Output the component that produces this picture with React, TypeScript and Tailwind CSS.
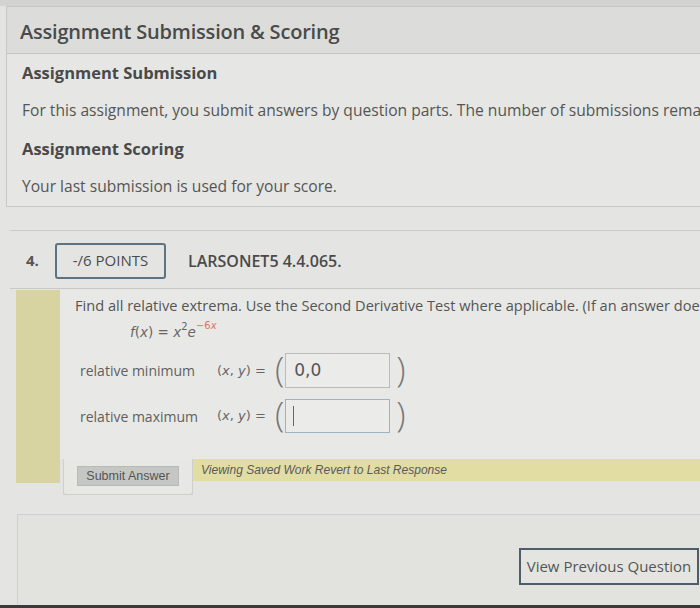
import React from 'react';

export default function App() {
  return (
    <div className="w-[700px] h-[608px] overflow-hidden flex flex-col bg-[#e4e5e2] font-['Open_Sans',sans-serif] text-[#4b4b4b]">
      <div className="h-[6px] shrink-0 bg-[#d3d4d1]" />

      {/* Assignment Submission & Scoring panel */}
      <div className="ml-[6px] shrink-0 border-t border-l border-b border-[#c7c8c5]">
        <div className="h-[47px] flex items-center pl-[13px] pt-[3px] bg-[#dcddda] border-b border-[#c4c5c2]">
          <h1 className="text-[20px] font-semibold text-[#4a4a4a] tracking-[-0.2px]">Assignment Submission &amp; Scoring</h1>
        </div>
        <div className="px-[15px] bg-[#e6e7e4] overflow-hidden">
          <div className="h-[38px] flex items-center text-[16.5px] font-bold text-[#4a4a4a]">Assignment Submission</div>
          <div className="h-[38px] flex items-center text-[15.6px] whitespace-nowrap text-[#555]">
            For this assignment, you submit answers by question parts. The number of submissions remaining for each question part only changes if you submit or change the answer.
          </div>
          <div className="h-[38px] flex items-center text-[16.5px] font-bold text-[#4a4a4a]">Assignment Scoring</div>
          <div className="h-[38px] flex items-center text-[15.6px] text-[#555]">Your last submission is used for your score.</div>
        </div>
      </div>

      {/* Question 4 */}
      <div className="ml-[10px] mt-[23px] shrink-0 border-t border-[#cbccc9]">
        <div className="h-[58px] flex items-center pl-[16px] pt-[2px] border-b border-[#c9cac7]">
          <span className="w-[29px] shrink-0 text-[15px] font-bold text-[#555]">4.</span>
          <div className="w-[111px] h-[36px] shrink-0 flex items-center justify-center border-2 border-[#5d7382] rounded-[3px] text-[15px] text-[#4a4a4a]">
            -/6 POINTS
          </div>
          <span className="ml-[22px] text-[16px] font-semibold text-[#4a4a4a]">LARSONET5 4.4.065.</span>
        </div>

        <div className="flex items-start">
          <div className="ml-[6px] mt-[1px] w-[44px] h-[193px] shrink-0 bg-[#d8d4a2]" />
          <div className="flex-1 min-w-0 mt-[1px] flex flex-col overflow-hidden">
            <div className="bg-[#e8e9e6]">
              <p className="pl-[15px] pt-[5px] text-[14.6px] leading-[20px] whitespace-nowrap text-[#555]">
                Find all relative extrema. Use the Second Derivative Test where applicable. (If an answer does not exist, enter DNE.)
              </p>
              <div className="pl-[70px] mt-[7px] h-[20px] flex items-center font-['DejaVu_Sans',sans-serif] text-[13.5px] text-[#666]">
                <span className="italic">f</span>(<span className="italic">x</span>)&nbsp;=&nbsp;<span className="italic">x</span>
                <sup className="text-[10px]">2</sup>
                <span className="italic">e</span>
                <sup className="text-[10px] text-[#e0706a] -translate-y-[1px]">−6<span className="italic">x</span></sup>
              </div>

              <div className="mt-[11px] flex items-center h-[35px]">
                <span className="pl-[20px] w-[157px] shrink-0 text-[14px] text-[#606060]">relative minimum</span>
                <span className="w-[58px] shrink-0 font-['DejaVu_Sans',sans-serif] text-[13px] text-[#666] whitespace-nowrap">
                  (<span className="italic">x</span>, <span className="italic">y</span>) =
                </span>
                <span className="text-[34px] font-light leading-none text-[#777] -mt-[4px]">(</span>
                <div className="ml-[1px] w-[105px] h-[35px] shrink-0 flex items-center pl-[8px] border border-[#b9bcbb] bg-[#ebecea] font-['DejaVu_Sans',sans-serif] text-[17px] text-[#555]">
                  0,0
                </div>
                <span className="ml-[6px] text-[34px] font-light leading-none text-[#777] -mt-[4px]">)</span>
              </div>

              <div className="mt-[11px] flex items-center h-[34px]">
                <span className="pl-[20px] w-[157px] shrink-0 text-[14px] text-[#606060]">relative maximum</span>
                <span className="w-[58px] shrink-0 font-['DejaVu_Sans',sans-serif] text-[13px] text-[#666] whitespace-nowrap">
                  (<span className="italic">x</span>, <span className="italic">y</span>) =
                </span>
                <span className="text-[34px] font-light leading-none text-[#777] -mt-[4px]">(</span>
                <div className="ml-[1px] w-[105px] h-[34px] shrink-0 flex items-center pl-[7px] border border-[#9fb2bf] bg-[#ebecea]">
                  <span className="w-px h-[20px] bg-[#666]" />
                </div>
                <span className="ml-[6px] text-[34px] font-light leading-none text-[#777] -mt-[4px]">)</span>
              </div>
              <div className="h-[26px]" />
            </div>

            <div className="flex items-start">
              <div className="ml-[3px] w-[130px] h-[36px] shrink-0 flex items-start pt-[7px] pl-[13px] bg-[#e7e7e4] border-l border-r border-b border-[#cfcfcb] rounded-b-[3px] shadow-[0_1px_1px_rgba(0,0,0,0.08)]">
                <button className="w-[102px] h-[20px] bg-[#c5c7c4] border border-[#b8bab7] font-['Liberation_Sans',sans-serif] text-[12.5px] leading-none text-[#555]">
                  Submit Answer
                </button>
              </div>
              <div className="flex-1 h-[22px] flex items-center pl-[8px] bg-[#e2dda3] font-['Liberation_Sans',sans-serif] italic text-[12px] text-[#5a5a5a] whitespace-nowrap">
                Viewing Saved Work Revert to Last Response
              </div>
            </div>
          </div>
        </div>
      </div>

      {/* Navigation panel */}
      <div className="flex-1 ml-[17px] mt-[19px] border-t border-l border-[#cfd0cc] bg-[#e2e3df] flex justify-end items-start pt-[33px] pr-[1px]">
        <button className="w-[180px] h-[37px] border-2 border-[#4f5d6a] text-[15px] text-[#555] bg-[#e4e5e1]">
          View Previous Question
        </button>
      </div>
      <div className="h-[3px] shrink-0 bg-[#3a3a38]" />
    </div>
  );
}
